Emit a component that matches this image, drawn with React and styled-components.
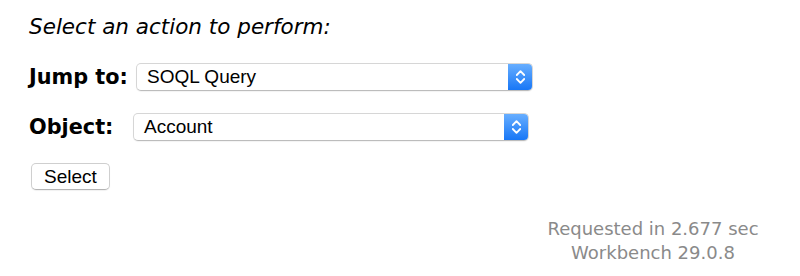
import React from 'react';
import styled, { createGlobalStyle } from 'styled-components';

const GlobalStyle = createGlobalStyle`
  html, body {
    margin: 0;
    padding: 0;
    background: #ffffff;
  }
  body {
    font-family: "DejaVu Sans", Verdana, sans-serif;
    color: #000000;
  }
`;

const Page = styled.div`
  width: 800px;
  height: 276px;
  box-sizing: border-box;
  padding: 14px 0 0 29px;
  display: flex;
  flex-direction: column;
`;

const Heading = styled.p`
  margin: 0 0 23px;
  font-size: 21.5px;
  font-style: italic;
  line-height: 26px;
`;

const Row = styled.div`
  display: flex;
  align-items: center;
  height: 28px;
  margin-bottom: ${(p) => p.$gap}px;
`;

const Label = styled.span`
  width: ${(p) => p.$width}px;
  font-size: 20.8px;
  font-weight: bold;
  flex-shrink: 0;
`;

const SelectBox = styled.div`
  width: ${(p) => p.$width}px;
  height: 28px;
  box-sizing: border-box;
  border: 1px solid #d6d6d6;
  border-bottom-color: #bcbcbc;
  border-radius: 5px;
  background: #ffffff;
  display: flex;
  align-items: center;
  overflow: hidden;
  box-shadow: 0 1px 1px rgba(0, 0, 0, 0.05);
`;

const SelectText = styled.span`
  flex: 1;
  padding-left: 10px;
  font-family: "Liberation Sans", Arial, sans-serif;
  font-size: 19px;
`;

const Arrow = styled.div`
  width: 24px;
  height: 100%;
  background: linear-gradient(#67aeff, #1877f6);
  display: flex;
  align-items: center;
  justify-content: center;
`;

const Button = styled.button`
  align-self: flex-start;
  margin-left: 2px;
  width: 79px;
  height: 27px;
  padding: 0;
  border: 1px solid #cfcfcf;
  border-bottom-color: #b4b4b4;
  border-radius: 5px;
  background: #ffffff;
  font-family: "Liberation Sans", Arial, sans-serif;
  font-size: 19px;
  color: #000000;
  box-shadow: 0 1px 1px rgba(0, 0, 0, 0.06);
`;

const Footer = styled.div`
  margin: 27px 0 0 504px;
  width: 240px;
  text-align: center;
  font-size: 18px;
  line-height: 24px;
  color: #8a8a8a;
`;

function Chevrons() {
  return (
    <svg width="11" height="18" viewBox="0 0 11 18">
      <path d="M1.8 7 L5.5 3.2 L9.2 7" fill="none" stroke="#fff" strokeWidth="1.8" strokeLinecap="round" strokeLinejoin="round" />
      <path d="M1.8 11 L5.5 14.8 L9.2 11" fill="none" stroke="#fff" strokeWidth="1.8" strokeLinecap="round" strokeLinejoin="round" />
    </svg>
  );
}

function FakeSelect({ value, width }) {
  return (
    <SelectBox $width={width}>
      <SelectText>{value}</SelectText>
      <Arrow>
        <Chevrons />
      </Arrow>
    </SelectBox>
  );
}

export default function App() {
  return (
    <Page>
      <GlobalStyle />
      <Heading>Select an action to perform:</Heading>
      <Row $gap={22}>
        <Label $width={107}>Jump to:</Label>
        <FakeSelect value="SOQL Query" width={397} />
      </Row>
      <Row $gap={22}>
        <Label $width={104}>Object:</Label>
        <FakeSelect value="Account" width={396} />
      </Row>
      <Button>Select</Button>
      <Footer>
        Requested in 2.677 sec
        <br />
        Workbench 29.0.8
      </Footer>
    </Page>
  );
}
